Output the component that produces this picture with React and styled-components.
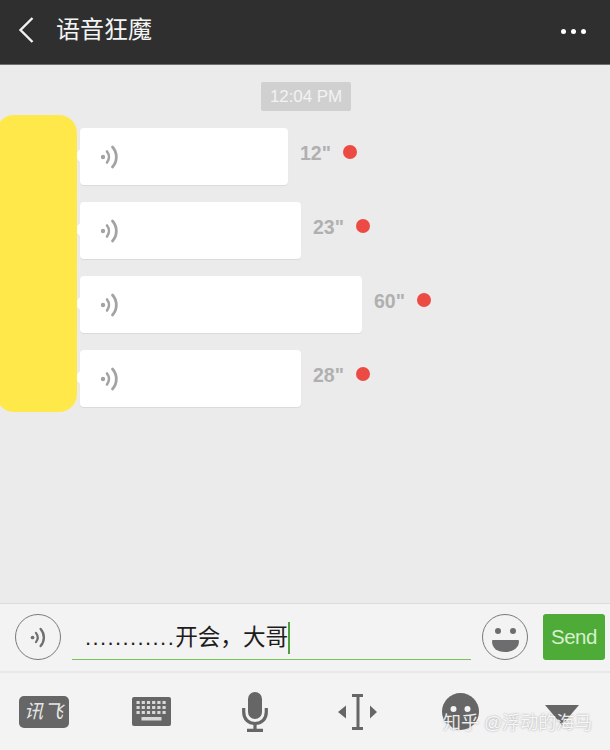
import React from "react";
import styled, { createGlobalStyle } from "styled-components";

const Global = createGlobalStyle`
  html, body { margin: 0; padding: 0; background: #ebebeb; }
  * { box-sizing: border-box; }
`;
const FONT = `"Liberation Sans", "Noto Sans CJK SC", sans-serif`;

const Page = styled.div`
  position: relative; width: 610px; height: 750px; overflow: hidden;
  display: flex; flex-direction: column; background: #ebebeb; font-family: ${FONT};
`;
const Header = styled.header`
  height: 65px; flex: none; background: #2f2f2f; border-bottom: 1px solid #6f6f6f;
  display: flex; align-items: center; padding: 0 24px 4px 18px; color: #f4f4f4;
`;
const Back = styled.svg`width: 16px; height: 26px; flex: none;`;
const Title = styled.h1`
  margin: 0 0 0 22px; flex: 1; font-size: 24px; line-height: 30px; font-weight: 400;
`;
const More = styled.div`
  display: flex; gap: 5px; margin-top: 3px;
  span { width: 5px; height: 5px; border-radius: 50%; background: #fff; }
`;
const Messages = styled.main`
  flex: 1; display: flex; flex-direction: column; padding: 17px 0 0 80px; min-height: 0;
`;
const TimeRow = styled.div`display: flex; justify-content: center; margin: 0 0 17px -78px;`;
const TimePill = styled.div`
  width: 90px; height: 29px; background: #d0d0d0; border-radius: 2px; color: #f3f3f3;
  font-size: 17px; line-height: 30px; text-align: center; letter-spacing: -0.1px;
`;
const Row = styled.div`display: flex; align-items: flex-start; height: 56px; margin-bottom: 18px;`;
const Bubble = styled.div`
  position: relative; height: 57px; border-radius: 4px; background: #fff; flex: none;
  box-shadow: 0 1px 1px #dadada; display: flex; align-items: center; padding-left: 20px;
  &::before {
    content: ""; position: absolute; left: -4px; top: 22px; width: 11px; height: 11px;
    background: #fff; transform: rotate(45deg); border-radius: 2px;
  }
`;
const Duration = styled.span`
  margin: 13px 0 0 12px; font-size: 19.5px; line-height: 24px; font-weight: 700; color: #b0b0b0;
`;
const Dot = styled.span`
  width: 14px; height: 14px; margin: 17px 0 0 12px; border-radius: 50%; background: #ec4b44; flex: none;
`;
const Redaction = styled.div`
  position: absolute; left: -4px; top: 115px; width: 81px; height: 297px;
  background: #ffe94a; border-radius: 18px;
`;
const InputBar = styled.section`
  height: 70px; flex: none; background: #f3f3f3; border-top: 1px solid #dcdcdc;
  border-bottom: 2px solid #e6e8ea; display: flex; align-items: flex-start; padding: 10px 5px 0 15px;
`;
const RoundButton = styled.div`
  width: 46px; height: 46px; flex: none; border: 1px solid #7a7a7a; border-radius: 50%;
  display: flex; align-items: center; justify-content: center;
`;
const Field = styled.div`
  width: 399px; height: 46px; margin: 0 11px; border-bottom: 1px solid #78c257;
  font-size: 22.6px; line-height: 30px; color: #1c1c1c; padding: 9px 0 0 13px;
  display: flex; align-items: flex-start; white-space: nowrap;
`;
const Dots = styled.span`font-size: 22px; letter-spacing: 1.4px;`;
const Caret = styled.span`
  width: 2px; height: 32px; margin-top: -1px; background: #4f9f3a; flex: none;
`;
const Send = styled.button`
  width: 62px; height: 46px; border: 0; padding: 0; margin-left: 15px; border-radius: 3px;
  background: #4eab38; color: #d8f0cf; font: 400 20.5px/46px ${FONT}; letter-spacing: -0.5px;
`;
const Toolbar = styled.nav`
  height: 77px; flex: none; background: #f3f3f3; display: grid;
  grid-template-columns: 113px 110px 96px 104px 102px auto; align-items: start; padding: 19px 0 0 19px;
`;
const Tool = styled.div`display: flex; justify-content: flex-start;`;
const XunfeiBadge = styled.div`
  width: 50px; height: 32px; margin-top: 4px; border-radius: 5px; background: #666;
  color: #e6e6e6; font-size: 19px; line-height: 32px; text-align: center; font-style: italic; letter-spacing: 1px;
`;
const Watermark = styled.div`
  position: absolute; left: 443px; top: 711px; color: rgba(255,255,255,.88);
  font-size: 18px; line-height: 24px; text-shadow: 0 0 2px rgba(110,110,110,.65); white-space: nowrap;
`;

const Wave = ({ c = "#a3a3a3", w = 20, h = 24 }) => (
  <svg width={w} height={h} viewBox="0 0 20 24" fill="none">
    <circle cx="3" cy="12" r="2.2" fill={c} />
    <path d="M7 6.5a9 9 0 0 1 0 11" stroke={c} strokeWidth="2.6" strokeLinecap="round" />
    <path d="M12.5 2a15 15 0 0 1 0 20" stroke={c} strokeWidth="2.8" strokeLinecap="round" />
  </svg>
);

const msgs = [
  { w: 208, d: '12"' },
  { w: 221, d: '23"' },
  { w: 282, d: '60"' },
  { w: 221, d: '28"' },
];

export default function App() {
  return (
    <Page>
      <Global />
      <Header>
        <Back viewBox="0 0 16 26" fill="none">
          <path d="M14.5 1 2.5 13l12 12" stroke="#f2f2f2" strokeWidth="2.4" />
        </Back>
        <Title>语音狂魔</Title>
        <More><span /><span /><span /></More>
      </Header>
      <Messages>
        <TimeRow><TimePill>12:04 PM</TimePill></TimeRow>
        {msgs.map((m) => (
          <Row key={m.d + m.w}>
            <Bubble style={{ width: m.w }}><Wave /></Bubble>
            <Duration>{m.d}</Duration>
            <Dot />
          </Row>
        ))}
      </Messages>
      <Redaction />
      <InputBar>
        <RoundButton><Wave c="#707070" w={17} h={21} /></RoundButton>
        <Field><Dots>............</Dots>开会，大哥<Caret /></Field>
        <RoundButton>
          <svg width="44" height="44" viewBox="0 0 44 44">
            <circle cx="15" cy="16" r="3" fill="#6d6d70" />
            <circle cx="30" cy="16" r="3" fill="#6d6d70" />
            <path d="M10 25h25q1 0 1 1c0 7-6 11-14 11S9 33 9 26q0-1 1-1Z" fill="#6d6d70" />
          </svg>
        </RoundButton>
        <Send>Send</Send>
      </InputBar>
      <Toolbar>
        <Tool><XunfeiBadge>讯飞</XunfeiBadge></Tool>
        <Tool>
          <svg width="39" height="29" viewBox="0 0 39 29" style={{ marginTop: 5 }}>
            <rect width="39" height="29" rx="2" fill="#666" />
            <g fill="#d8d8d8">
              {[4, 9, 14].map((y) =>
                [0, 1, 2, 3, 4, 5].map((i) => <rect key={y + "-" + i} x={4.5 + i * 5.2} y={y} width="3.2" height="3" />)
              )}
              <rect x="9.5" y="20" width="20" height="3.5" />
            </g>
          </svg>
        </Tool>
        <Tool>
          <svg width="26" height="40" viewBox="0 0 26 40">
            <rect x="6" y="0" width="14" height="27" rx="7" fill="#666" />
            <path d="M1.7 16v4c0 7 4.6 11.5 11.3 11.5S24.3 27 24.3 20v-4" fill="none" stroke="#666" strokeWidth="3.2" />
            <path d="M13 31v6M5 38.3h16" stroke="#666" strokeWidth="3.2" />
          </svg>
        </Tool>
        <Tool>
          <svg width="39" height="36" viewBox="0 0 39 36" style={{ marginTop: 2 }}>
            <path d="M8 11.5v13l-8-6.5ZM32 11.5v13l7-6.5Z" fill="#666" />
            <path d="M20 0v36M14 1.5h11M14 34.5h11" stroke="#666" strokeWidth="3" />
          </svg>
        </Tool>
        <Tool>
          <svg width="37" height="37" viewBox="0 0 37 37" style={{ marginTop: 1 }}>
            <circle cx="18.5" cy="18.5" r="18.5" fill="#666" />
            <circle cx="11.5" cy="16" r="3" fill="#f3f3f3" />
            <circle cx="25.5" cy="16" r="3" fill="#f3f3f3" />
          </svg>
        </Tool>
        <Tool>
          <svg width="34" height="20" viewBox="0 0 34 20" style={{ marginTop: 13, marginLeft: 1 }}>
            <path d="M0 0h34L17 20Z" fill="#666" />
          </svg>
        </Tool>
      </Toolbar>
      <Watermark>知乎 @浮动的海马</Watermark>
    </Page>
  );
}
